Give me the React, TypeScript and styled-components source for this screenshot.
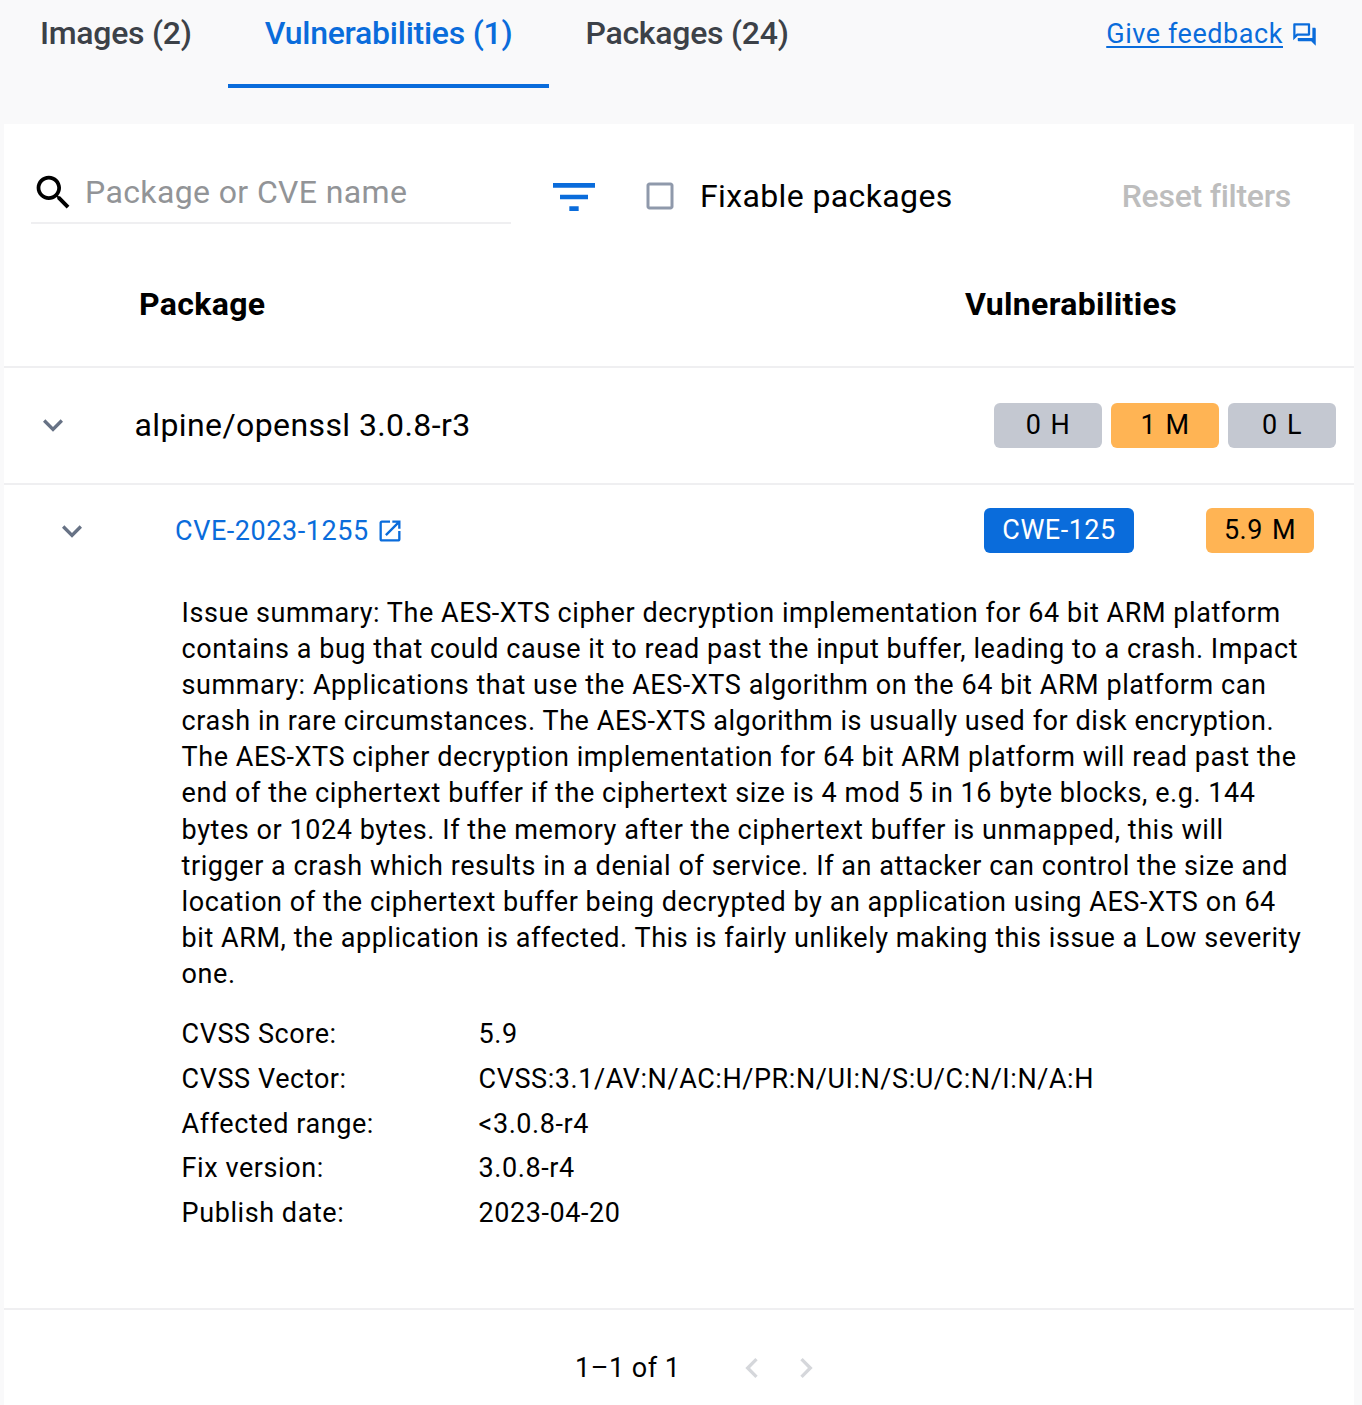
import React from "react";
import styled, { createGlobalStyle } from "styled-components";

const Global = createGlobalStyle`
  html, body { margin: 0; padding: 0; background: #f9f9fa; }
  body { font-family: Roboto, "Liberation Sans", sans-serif; }
  * { box-sizing: border-box; }
`;

const Page = styled.div`
  width: 1362px;
  height: 1405px;
  overflow: hidden;
  background: #f9f9fa;
  color: #000;
`;

const TabBar = styled.div`
  height: 88px;
  margin-bottom: 36px;
  padding-left: 3.4px;
  display: flex;
  align-items: flex-start;
`;

const Tab = styled.div<{ $active?: boolean }>`
  height: 88px;
  padding: 14px 36.5px 0;
  font-size: 32px;
  line-height: 38px;
  font-weight: 500;
  letter-spacing: -0.25px;
  color: ${(p) => (p.$active ? "#0a6cdb" : "#3c4148")};
  border-bottom: 4px solid ${(p) => (p.$active ? "#0a6cdb" : "transparent")};
`;

const Feedback = styled.div`
  margin-left: auto;
  margin-right: 44px;
  margin-top: 17px;
  display: flex;
  align-items: center;
  gap: 8px;
  color: #0a6cdb;
  font-size: 27px;
  line-height: 34px;
  letter-spacing: 0.56px;
  text-decoration: underline;
  text-decoration-thickness: 1.5px;
  text-underline-offset: 3px;
`;

const Panel = styled.div`
  width: 1350px;
  margin-left: 4px;
  background: #fff;
`;

const Filters = styled.div`
  height: 132px;
  padding: 42px 0 0 27px;
  display: flex;
  align-items: flex-start;
`;

const Search = styled.div`
  width: 480px;
  height: 58px;
  padding-bottom: 4px;
  display: flex;
  align-items: center;
  gap: 9px;
  border-bottom: 2px solid #efeff1;
  color: #929497;
  font-size: 32px;
  letter-spacing: 0.38px;
`;

const FilterIcon = styled.div`
  margin-left: 35px;
  margin-top: 3px;
  display: flex;
`;

const CheckLabel = styled.label`
  margin-left: 40px;
  margin-top: 4px;
  display: flex;
  align-items: center;
  gap: 22px;
  font-size: 32px;
  line-height: 52px;
  letter-spacing: 0.38px;
`;

const Reset = styled.div`
  margin-left: auto;
  margin-right: 63px;
  margin-top: 8px;
  font-size: 32px;
  line-height: 44px;
  font-weight: 500;
  letter-spacing: -0.26px;
  color: #bdbdbd;
`;

const HeaderRow = styled.div`
  height: 112px;
  padding: 0 177px 14px 135px;
  display: flex;
  align-items: center;
  justify-content: space-between;
  border-bottom: 2px solid #efeff1;
  font-size: 32px;
  font-weight: 700;
  letter-spacing: 0.35px;
`;

const PackageRow = styled.div`
  height: 117px;
  padding: 0 18px 1px 29px;
  display: flex;
  align-items: center;
  border-bottom: 2px solid #efeff1;
`;

const PackageName = styled.div`
  margin-left: 61.5px;
  font-size: 32px;
  letter-spacing: 0.4px;
`;

const Badges = styled.div`
  margin-left: auto;
  display: flex;
  gap: 9px;
`;

const Badge = styled.div<{ $bg: string; $color?: string; $w?: number }>`
  width: ${(p) => p.$w ?? 108}px;
  height: 45px;
  border-radius: 6px;
  display: flex;
  align-items: center;
  justify-content: center;
  background: ${(p) => p.$bg};
  color: ${(p) => p.$color ?? "#000"};
  font-size: 27px;
  letter-spacing: 0.5px;
  word-spacing: 2px;
  white-space: pre;
`;

const CveRow = styled.div`
  height: 93px;
  padding: 0 40px 1px 48px;
  display: flex;
  align-items: center;
`;

const CveLink = styled.div`
  margin-left: 83px;
  display: flex;
  align-items: center;
  gap: 7px;
  color: #0a6cdb;
  font-size: 27px;
  letter-spacing: 0.56px;
`;

const CveBadges = styled.div`
  margin-left: auto;
  margin-bottom: 2px;
  display: flex;
  gap: 72px;
`;

const Details = styled.div`
  height: 732px;
  padding: 17px 48px 0 177.6px;
  border-bottom: 2px solid #efeff1;
`;

const Summary = styled.p`
  margin: 0 0 20px;
  font-size: 27px;
  line-height: 36.1px;
  letter-spacing: 0.56px;
`;

const Facts = styled.dl`
  margin: 0;
  display: grid;
  grid-template-columns: 297px 1fr;
  grid-auto-rows: 44.7px;
  align-items: center;
  font-size: 27px;
  letter-spacing: 0.57px;
  dt, dd { margin: 0; }
`;

const Pager = styled.div`
  height: 96px;
  padding: 20px 0 0 571px;
  display: flex;
  align-items: center;
  font-size: 27px;
  letter-spacing: 0.5px;
`;

const PagerIcons = styled.div`
  margin-left: 52px;
  display: flex;
  gap: 14px;
`;

const Icon = ({ d, size, color }: { d: string; size: number; color: string }) => (
  <svg width={size} height={size} viewBox="0 0 24 24" fill={color} style={{ flex: "none" }}>
    <path d={d} />
  </svg>
);

const P = {
  search:
    "M15.5 14h-.79l-.28-.27C15.41 12.59 16 11.11 16 9.5 16 5.91 13.09 3 9.5 3S3 5.91 3 9.5 5.91 16 9.5 16c1.61 0 3.09-.59 4.23-1.57l.27.28v.79l5 4.99L20.49 19l-4.99-5zm-6 0C7.01 14 5 11.99 5 9.5S7.01 5 9.5 5 14 7.01 14 9.5 11.99 14 9.5 14z",
  filter: "M10 18h4v-2h-4v2zM3 6v2h18V6H3zm3 7h12v-2H6v2z",
  box: "M19 5v14H5V5h14m0-2H5c-1.1 0-2 .9-2 2v14c0 1.1.9 2 2 2h14c1.1 0 2-.9 2-2V5c0-1.1-.9-2-2-2z",
  expand: "M16.59 8.59L12 13.17 7.41 8.59 6 10l6 6 6-6z",
  open: "M19 19H5V5h7V3H5c-1.11 0-2 .9-2 2v14c0 1.1.89 2 2 2h14c1.1 0 2-.9 2-2v-7h-2v7zM14 3v2h3.59l-9.83 9.83 1.41 1.41L19 6.41V10h2V3h-7z",
  left: "M15.41 7.41L14 6l-6 6 6 6 1.41-1.41L10.83 12z",
  right: "M10 6L8.59 7.41 13.17 12l-4.58 4.59L10 18l6-6z",
  forum:
    "M15 4v7H5.17L4 12.17V4h11m1-2H3c-.55 0-1 .45-1 1v14l4-4h10c.55 0 1-.45 1-1V3c0-.55-.45-1-1-1zm5 4h-2v9H6v2c0 .55.45 1 1 1h11l4 4V7c0-.55-.45-1-1-1z",
};

const facts: [string, string][] = [
  ["CVSS Score:", "5.9"],
  ["CVSS Vector:", "CVSS:3.1/AV:N/AC:H/PR:N/UI:N/S:U/C:N/I:N/A:H"],
  ["Affected range:", "<3.0.8-r4"],
  ["Fix version:", "3.0.8-r4"],
  ["Publish date:", "2023-04-20"],
];

export default function App() {
  return (
    <Page>
      <Global />
      <TabBar>
        <Tab>Images (2)</Tab>
        <Tab $active>Vulnerabilities (1)</Tab>
        <Tab>Packages (24)</Tab>
        <Feedback>
          <span>Give feedback</span>
          <Icon d={P.forum} size={27} color="#0a6cdb" />
        </Feedback>
      </TabBar>
      <Panel>
        <Filters>
          <Search>
            <Icon d={P.search} size={45} color="#000" />
            <span>Package or CVE name</span>
          </Search>
          <FilterIcon>
            <Icon d={P.filter} size={56} color="#0a6cdb" />
          </FilterIcon>
          <CheckLabel>
            <Icon d={P.box} size={36} color="#8f99ab" />
            <span>Fixable packages</span>
          </CheckLabel>
          <Reset>Reset filters</Reset>
        </Filters>
        <HeaderRow>
          <span>Package</span>
          <span>Vulnerabilities</span>
        </HeaderRow>
        <PackageRow>
          <Icon d={P.expand} size={40} color="#677285" />
          <PackageName>alpine/openssl 3.0.8-r3</PackageName>
          <Badges>
            <Badge $bg="#c4c8d1">0 H</Badge>
            <Badge $bg="#ffb454">1 M</Badge>
            <Badge $bg="#c4c8d1">0 L</Badge>
          </Badges>
        </PackageRow>
        <CveRow>
          <Icon d={P.expand} size={40} color="#677285" />
          <CveLink>
            CVE-2023-1255
            <Icon d={P.open} size={28} color="#0a6cdb" />
          </CveLink>
          <CveBadges>
            <Badge $bg="#0a6cdb" $color="#fff" $w={150}>CWE-125</Badge>
            <Badge $bg="#ffb454">5.9 M</Badge>
          </CveBadges>
        </CveRow>
        <Details>
          <Summary>
            Issue summary: The AES-XTS cipher decryption implementation for 64 bit ARM platform
            <br />
            contains a bug that could cause it to read past the input buffer, leading to a crash. Impact
            <br />
            summary: Applications that use the AES-XTS algorithm on the 64 bit ARM platform can
            <br />
            crash in rare circumstances. The AES-XTS algorithm is usually used for disk encryption.
            <br />
            The AES-XTS cipher decryption implementation for 64 bit ARM platform will read past the
            <br />
            end of the ciphertext buffer if the ciphertext size is 4 mod 5 in 16 byte blocks, e.g. 144
            <br />
            bytes or 1024 bytes. If the memory after the ciphertext buffer is unmapped, this will
            <br />
            trigger a crash which results in a denial of service. If an attacker can control the size and
            <br />
            location of the ciphertext buffer being decrypted by an application using AES-XTS on 64
            <br />
            bit ARM, the application is affected. This is fairly unlikely making this issue a Low severity
            <br />
            one.
          </Summary>
          <Facts>
            {facts.map(([k, v]) => (
              <React.Fragment key={k}>
                <dt>{k}</dt>
                <dd>{v}</dd>
              </React.Fragment>
            ))}
          </Facts>
        </Details>
        <Pager>
          <span>1–1 of 1</span>
          <PagerIcons>
            <Icon d={P.left} size={40} color="#d5d7db" />
            <Icon d={P.right} size={40} color="#d5d7db" />
          </PagerIcons>
        </Pager>
      </Panel>
    </Page>
  );
}
